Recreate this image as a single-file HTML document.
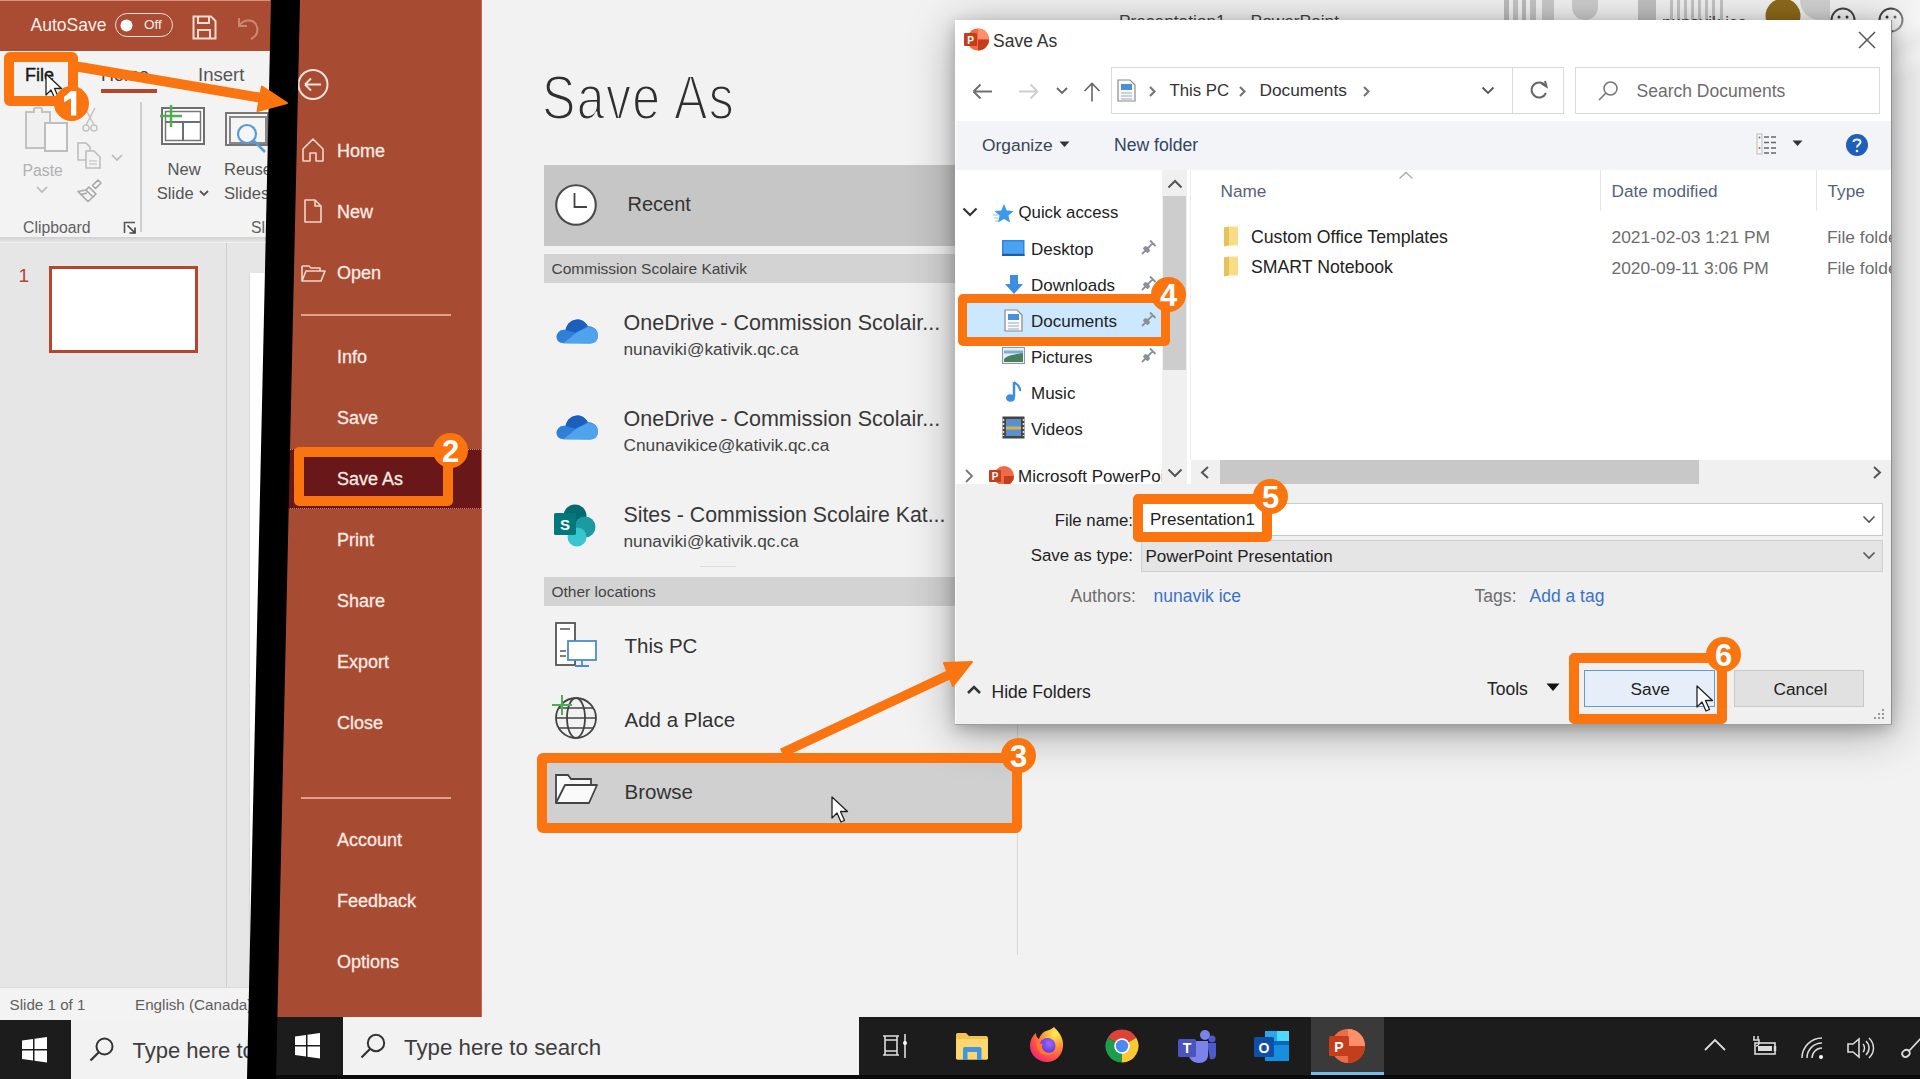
<!DOCTYPE html>
<html><head><meta charset="utf-8">
<style>
*{margin:0;padding:0;box-sizing:border-box}
html,body{width:1920px;height:1079px;overflow:hidden;background:#f1f1f1;font-family:"Liberation Sans",sans-serif}
.a{position:absolute}
.t{position:absolute;white-space:nowrap;line-height:1}
svg{position:absolute;overflow:visible}
</style></head><body>
<div class="a" style="left:0;top:0;width:300px;height:1079px;overflow:hidden">
<div class="a" style="left:0px;top:0px;width:300px;height:51px;background:#a94c33;"></div>
<div class="a" style="left:0px;top:0px;width:300px;height:1px;background:#d9937c;"></div>
<div class="a" style="left:0px;top:51px;width:300px;height:186px;background:#f3f3f3;"></div>
<div class="a" style="left:0px;top:237px;width:300px;height:5px;background:linear-gradient(#d0d0d0,#e6e6e6);"></div>
<div class="a" style="left:0px;top:243px;width:300px;height:745px;background:#e6e6e6;"></div>
<div class="a" style="left:226px;top:243px;width:1px;height:745px;background:#cdcdcd;"></div>
<div class="a" style="left:249px;top:273px;width:1px;height:715px;background:#d8d8d8;"></div>
<div class="a" style="left:250px;top:273px;width:60px;height:715px;background:#ffffff;"></div>
<div class="a" style="left:0px;top:987px;width:300px;height:33px;background:#f3f3f3;border-top:1px solid #d9d9d9"></div>
<div class="t" style="left:9.5px;top:996.6px;font-size:15.2px;color:#5f5f5f;">Slide 1 of 1</div>
<div class="t" style="left:135.0px;top:996.6px;font-size:15.2px;color:#5f5f5f;">English (Canada)</div>
<div class="a" style="left:0px;top:1020px;width:300px;height:59px;background:#f2f2f2;"></div>
<div class="a" style="left:0px;top:1020px;width:71px;height:59px;background:#1c1c1c;"></div>
<svg width="27" height="26" viewBox="0 0 27 26" style="left:22px;top:1037px"><path d="M0 3.5 L11 2 V12 H0Z M12.5 1.8 L25 0 V12 H12.5Z M0 13.5 H11 V23.5 L0 22Z M12.5 13.5 H25 V25.5 L12.5 23.7Z" fill="#fff"/></svg>
<svg width="26" height="26" viewBox="0 0 26 26" style="left:89px;top:1037px"><circle cx="15.5" cy="9.5" r="8" fill="none" stroke="#333" stroke-width="2"/><path d="M9.8 15.2 L1.5 23.5" stroke="#333" stroke-width="2.2"/></svg>
<div class="t" style="left:132.5px;top:1040.4px;font-size:22px;color:#3d3d3d;">Type here to search</div>
<div class="t" style="left:30.5px;top:16.9px;font-size:17.5px;color:#fbeee6;">AutoSave</div>
<div class="a" style="left:115px;top:12.5px;width:57.5px;height:24.5px;border:1.8px solid #f3dcd0;border-radius:13px"></div>
<svg width="13" height="13" viewBox="0 0 13 13" style="left:120px;top:19px"><circle cx="6.5" cy="6.5" r="6" fill="#fff"/></svg>
<div class="t" style="left:144.0px;top:18.4px;font-size:13.5px;color:#fbeee6;">Off</div>
<svg width="26" height="26" viewBox="0 0 26 26" style="left:192px;top:15px"><path d="M1.5 1.5 H19 L23.5 6 V23.5 H1.5Z" fill="none" stroke="#f3dcd0" stroke-width="2"/><path d="M6 1.5 V8 H17 V1.5 M6 23.5 V15 H18 V23.5" fill="none" stroke="#f3dcd0" stroke-width="2"/></svg>
<svg width="26" height="26" viewBox="0 0 26 26" style="left:236px;top:15px"><path d="M3 3 V11 H11 M3.5 10.5 C7 4 19 3 21 12 C22.5 18 19 22 15 24" fill="none" stroke="#c98a74" stroke-width="2"/></svg>
<div class="t" style="left:25.0px;top:65.8px;font-size:18px;color:#1a1a1a;-webkit-text-stroke:0.4px #1a1a1a">File</div>
<div class="t" style="left:101.0px;top:65.6px;font-size:18px;color:#444;">Home</div>
<div class="a" style="left:101px;top:89px;width:56px;height:4px;background:#b2472d;"></div>
<div class="t" style="left:198.0px;top:65.8px;font-size:18.5px;color:#555;">Insert</div>
<svg width="46" height="48" viewBox="0 0 46 48" style="left:24px;top:106px"><path d="M2 6 H10 V3 C10 1 18 1 18 3 V6 H26 V42 H2Z" fill="#f0f0f0" stroke="#c2c2c2" stroke-width="2"/><rect x="21" y="17" width="22" height="28" fill="#f7f7f7" stroke="#bdbdbd" stroke-width="2"/></svg>
<div class="t" style="left:22.5px;top:162.6px;font-size:15.8px;color:#b0b0b0;">Paste</div>
<svg width="12" height="8" viewBox="0 0 12 8" style="left:36px;top:186px"><path d="M1 1 L6 6 L11 1" fill="none" stroke="#b8b8b8" stroke-width="1.6"/></svg>
<svg width="16" height="26" viewBox="0 0 16 26" style="left:82px;top:107px"><path d="M3 1 L12 18 M13 1 L4 18" stroke="#c4c4c4" stroke-width="1.6"/><circle cx="4" cy="21" r="3" fill="none" stroke="#c4c4c4" stroke-width="1.6"/><circle cx="12" cy="21" r="3" fill="none" stroke="#c4c4c4" stroke-width="1.6"/></svg>
<svg width="26" height="27" viewBox="0 0 26 27" style="left:77px;top:142px"><path d="M1 1 H9 L13 5 V18 H1Z" fill="none" stroke="#bdbdbd" stroke-width="1.6"/><path d="M9 9 H17 L23 15 V26 H9Z" fill="#f3f3f3" stroke="#bdbdbd" stroke-width="1.6"/><path d="M12 19 H20 M12 22 H20" stroke="#bdbdbd" stroke-width="1.2"/></svg>
<svg width="12" height="8" viewBox="0 0 12 8" style="left:111px;top:154px"><path d="M1 1 L6 6 L11 1" fill="none" stroke="#b8b8b8" stroke-width="1.6"/></svg>
<svg width="28" height="26" viewBox="0 0 28 26" style="left:76px;top:179px"><path d="M25 4 L22 1 L16.5 6.5 L19.5 9.5Z" fill="none" stroke="#a8a8a8" stroke-width="1.6" stroke-linejoin="round"/><path d="M13 8 L20 15 L17 18 L10 11Z" fill="none" stroke="#a8a8a8" stroke-width="1.6" stroke-linejoin="round"/><path d="M10 11 L2 12.5 L12 22.5 L17 18" fill="none" stroke="#a8a8a8" stroke-width="1.6" stroke-linejoin="round"/><path d="M5 15.5 L11 14" stroke="#a8a8a8" stroke-width="1.3"/></svg>
<div class="a" style="left:140px;top:102px;width:1.5px;height:130px;background:#cfcfcf;"></div>
<div class="t" style="left:23.0px;top:220.1px;font-size:15.8px;color:#5f5f5f;">Clipboard</div>
<svg width="14" height="14" viewBox="0 0 14 14" style="left:123px;top:221px"><path d="M1.5 12 V1.5 H12" fill="none" stroke="#555" stroke-width="1.6"/><path d="M4.5 4.5 L12 12 M12 6.5 V12 H6.5" fill="none" stroke="#444" stroke-width="1.7"/></svg>
<svg width="50" height="44" viewBox="0 0 50 44" style="left:158px;top:103px"><rect x="4" y="5" width="42" height="36" fill="#fff" stroke="#6f6f6f" stroke-width="2"/><rect x="7.5" y="8.5" width="35" height="29" fill="none" stroke="#777" stroke-width="1.5"/><path d="M7.5 19 H42.5 M25 19 V37.5" stroke="#6f6f6f" stroke-width="2"/><path d="M2 13 H24 M13 2 V24" stroke="#4caf50" stroke-width="2.5"/></svg>
<div class="t" style="left:167.5px;top:162.4px;font-size:16.6px;color:#555;">New</div>
<div class="t" style="left:156.8px;top:186.4px;font-size:16.6px;color:#555;">Slide</div>
<svg width="10" height="7" viewBox="0 0 10 7" style="left:199px;top:190px"><path d="M1 1 L5 5 L9 1" fill="none" stroke="#555" stroke-width="1.8"/></svg>
<svg width="50" height="50" viewBox="0 0 50 50" style="left:225px;top:112px"><rect x="1" y="1" width="42" height="32" fill="none" stroke="#777" stroke-width="2"/><rect x="5" y="5" width="36" height="26" fill="#f5f5f5" stroke="#888" stroke-width="2"/><circle cx="22" cy="22" r="9" fill="none" stroke="#5b9bd5" stroke-width="2.2"/><path d="M28.5 28.5 L40 40" stroke="#5b9bd5" stroke-width="2.5"/></svg>
<div class="t" style="left:224.0px;top:162.4px;font-size:16.6px;color:#555;">Reuse</div>
<div class="t" style="left:224.0px;top:186.4px;font-size:16.6px;color:#555;">Slides</div>
<div class="t" style="left:251.0px;top:220.1px;font-size:15.8px;color:#5f5f5f;">Sli</div>
<div class="t" style="left:18.5px;top:266.4px;font-size:19px;color:#b2472d;">1</div>
<div class="a" style="left:48.5px;top:265.5px;width:149px;height:87px;border:3.2px solid #b2472d;background:#fff"></div>
</div>
<div class="a" style="left:270px;top:0px;width:211px;height:1017px;background:#a84b33;"></div>
<div class="a" style="left:270px;top:449px;width:211px;height:60px;background:#6a1719;border-top:1px dotted #c98a7a;border-bottom:1px dotted #c98a7a"></div>
<div class="a" style="left:301px;top:314px;width:150px;height:2px;background:#e3a18a;"></div>
<div class="a" style="left:301px;top:797px;width:150px;height:2px;background:#e3a18a;"></div>
<svg width="40" height="40" viewBox="0 0 40 40" style="left:293px;top:65px"><circle cx="20" cy="19.5" r="14.5" fill="none" stroke="#f6e4da" stroke-width="2"/><path d="M12 19.5 H28 M12 19.5 L18 13.5 M12 19.5 L18 25.5" fill="none" stroke="#f6e4da" stroke-width="2"/></svg>
<svg width="30" height="30" viewBox="0 0 30 30" style="left:300px;top:136px"><path d="M3 13 L13 3 L23 13 V25 H16 V17 H10 V25 H3 Z" fill="none" stroke="#f0d6c8" stroke-width="1.6" stroke-linejoin="round"/></svg>
<svg width="30" height="30" viewBox="0 0 30 30" style="left:302px;top:198px"><path d="M3 2 H13 L19 8 V24 H3 Z M13 2 V8 H19" fill="none" stroke="#f0d6c8" stroke-width="1.6" stroke-linejoin="round"/></svg>
<svg width="30" height="30" viewBox="0 0 30 30" style="left:300px;top:262px"><path d="M2 4 H9 L11 6 H20 V9 M2 4 V19 L6 9 H25 L21 19 H2" fill="none" stroke="#f0d6c8" stroke-width="1.6" stroke-linejoin="round"/></svg>
<div class="t" style="left:337.0px;top:141.8px;font-size:18px;color:#f8ebe3;-webkit-text-stroke:0.3px #f8ebe3">Home</div>
<div class="t" style="left:337.0px;top:202.8px;font-size:18px;color:#f8ebe3;-webkit-text-stroke:0.3px #f8ebe3">New</div>
<div class="t" style="left:337.0px;top:263.8px;font-size:18px;color:#f8ebe3;-webkit-text-stroke:0.3px #f8ebe3">Open</div>
<div class="t" style="left:337.0px;top:347.8px;font-size:18px;color:#f8ebe3;-webkit-text-stroke:0.3px #f8ebe3">Info</div>
<div class="t" style="left:337.0px;top:408.8px;font-size:18px;color:#f8ebe3;-webkit-text-stroke:0.3px #f8ebe3">Save</div>
<div class="t" style="left:337.0px;top:469.8px;font-size:18px;color:#f8ebe3;-webkit-text-stroke:0.3px #f8ebe3">Save As</div>
<div class="t" style="left:337.0px;top:530.8px;font-size:18px;color:#f8ebe3;-webkit-text-stroke:0.3px #f8ebe3">Print</div>
<div class="t" style="left:337.0px;top:591.8px;font-size:18px;color:#f8ebe3;-webkit-text-stroke:0.3px #f8ebe3">Share</div>
<div class="t" style="left:337.0px;top:652.8px;font-size:18px;color:#f8ebe3;-webkit-text-stroke:0.3px #f8ebe3">Export</div>
<div class="t" style="left:337.0px;top:713.8px;font-size:18px;color:#f8ebe3;-webkit-text-stroke:0.3px #f8ebe3">Close</div>
<div class="t" style="left:337.0px;top:830.8px;font-size:18px;color:#f8ebe3;-webkit-text-stroke:0.3px #f8ebe3">Account</div>
<div class="t" style="left:337.0px;top:891.8px;font-size:18px;color:#f8ebe3;-webkit-text-stroke:0.3px #f8ebe3">Feedback</div>
<div class="t" style="left:337.0px;top:952.8px;font-size:18px;color:#f8ebe3;-webkit-text-stroke:0.3px #f8ebe3">Options</div>
<div class="a" style="left:481px;top:0px;width:1439px;height:1017px;background:#f2f2f2;"></div>
<div class="a" style="left:481px;top:0px;width:1px;height:1017px;background:#c9654a;"></div>
<div class="t" style="left:542.0px;top:76.7px;font-size:50px;color:#2f2f2f;letter-spacing:1.4px;transform:scaleY(1.25);transform-origin:0 85%;-webkit-text-stroke:1.6px #f2f2f2">Save As</div>
<div class="a" style="left:544px;top:165px;width:500px;height:81px;background:#c6c6c6;"></div>
<svg width="44" height="44" viewBox="0 0 44 44" style="left:554px;top:183px"><circle cx="22" cy="22" r="19.8" fill="#fff" stroke="#4a4a4a" stroke-width="2.1"/><path d="M20.5 10 V24 H33" fill="none" stroke="#444" stroke-width="1.8"/></svg>
<div class="t" style="left:627.5px;top:194.1px;font-size:20px;color:#333;">Recent</div>
<div class="a" style="left:544px;top:254px;width:500px;height:29px;background:#d3d3d3;"></div>
<div class="t" style="left:551.5px;top:260.9px;font-size:15.5px;color:#444;">Commission Scolaire Kativik</div>
<svg width="44" height="30" viewBox="0 0 44 30" style="left:555px;top:316px"><path d="M8 27 C2 27 0 21 2.5 17.5 C4.5 14 8 13.5 10.5 14 C12 7 17 3.5 22.5 3.5 C27 3.5 30.5 6 32.5 10 C38 10 43 13.5 43 19.5 C43 24.5 39.5 27.5 35 27.5 Z" fill="#2f7fd8"/><path d="M10.5 14 C12 7 17 3.5 22.5 3.5 C27 3.5 30.5 6 32.5 10 L22 17Z" fill="#1c5fbd"/><path d="M8 27.5 L22 16 L33 11 C38 11 43 14 43 19.5 C43 24.5 39.5 27.5 35 27.5Z" fill="#4ea3ec"/></svg>
<div class="t" style="left:623.5px;top:312.8px;font-size:21.5px;color:#383838;">OneDrive - Commission Scolair...</div>
<div class="t" style="left:623.5px;top:340.9px;font-size:17.3px;color:#444;">nunaviki@kativik.qc.ca</div>
<svg width="44" height="30" viewBox="0 0 44 30" style="left:555px;top:412px"><path d="M8 27 C2 27 0 21 2.5 17.5 C4.5 14 8 13.5 10.5 14 C12 7 17 3.5 22.5 3.5 C27 3.5 30.5 6 32.5 10 C38 10 43 13.5 43 19.5 C43 24.5 39.5 27.5 35 27.5 Z" fill="#2f7fd8"/><path d="M10.5 14 C12 7 17 3.5 22.5 3.5 C27 3.5 30.5 6 32.5 10 L22 17Z" fill="#1c5fbd"/><path d="M8 27.5 L22 16 L33 11 C38 11 43 14 43 19.5 C43 24.5 39.5 27.5 35 27.5Z" fill="#4ea3ec"/></svg>
<div class="t" style="left:623.5px;top:408.8px;font-size:21.5px;color:#383838;">OneDrive - Commission Scolair...</div>
<div class="t" style="left:623.5px;top:436.9px;font-size:17.3px;color:#444;">Cnunavikice@kativik.qc.ca</div>
<svg width="44" height="44" viewBox="0 0 44 44" style="left:554px;top:503px"><circle cx="21" cy="13" r="11.5" fill="#036c70"/><circle cx="31" cy="24" r="10.5" fill="#1a9ba1"/><circle cx="23" cy="34" r="9.5" fill="#37c6d0"/><rect x="0" y="10" width="22" height="22" rx="1.5" fill="#03787c"/><text x="11" y="27" text-anchor="middle" font-family="Liberation Sans" font-weight="bold" font-size="15" fill="#fff">S</text></svg>
<div class="t" style="left:623.5px;top:505.0px;font-size:21.3px;color:#383838;">Sites - Commission Scolaire Kat...</div>
<div class="t" style="left:623.5px;top:532.9px;font-size:17.3px;color:#444;">nunaviki@kativik.qc.ca</div>
<div class="a" style="left:700px;top:566px;width:36px;height:1px;background:#dcdcdc;"></div>
<div class="a" style="left:544px;top:577px;width:500px;height:29px;background:#d3d3d3;"></div>
<div class="t" style="left:551.5px;top:584.4px;font-size:15.5px;color:#444;">Other locations</div>
<svg width="46" height="48" viewBox="0 0 46 48" style="left:554px;top:621px"><rect x="2" y="2" width="19" height="42" fill="#fff" stroke="#555" stroke-width="1.8"/><path d="M6 8 H16 M6 30 H12 M6 35 H12" stroke="#555" stroke-width="1.6"/><rect x="14" y="20" width="28" height="19" fill="#fff" stroke="#4a8bd6" stroke-width="1.8"/><path d="M28 39 V44 M21 45 H35" stroke="#4a8bd6" stroke-width="1.8"/></svg>
<div class="t" style="left:624.5px;top:636.3px;font-size:20.5px;color:#333;">This PC</div>
<svg width="48" height="48" viewBox="0 0 48 48" style="left:552px;top:693px"><circle cx="24" cy="25" r="20" fill="none" stroke="#444" stroke-width="1.8"/><ellipse cx="24" cy="25" rx="9" ry="20" fill="none" stroke="#444" stroke-width="1.8"/><path d="M4 25 H44 M7 15 H41 M7 35 H41" stroke="#444" stroke-width="1.6"/><path d="M0 12 H20 M10 2 V22" stroke="#4caf50" stroke-width="2"/></svg>
<div class="t" style="left:624.5px;top:709.6px;font-size:20.5px;color:#333;">Add a Place</div>
<div class="a" style="left:546px;top:762px;width:468px;height:61px;background:#d0d0d0;"></div>
<svg width="48" height="36" viewBox="0 0 48 36" style="left:553px;top:772px"><path d="M3 31 V3 H15 L18 7 H38 V13" fill="#fafafa" stroke="#444" stroke-width="1.8"/><path d="M3 31 L12 13 H44 L36 31Z" fill="#fafafa" stroke="#444" stroke-width="1.8" stroke-linejoin="round"/></svg>
<div class="t" style="left:624.5px;top:782.1px;font-size:20.5px;color:#333;">Browse</div>
<div class="a" style="left:1017px;top:725px;width:1px;height:230px;background:#d8d8d8;"></div>
<div class="t" style="left:1119.0px;top:13.4px;font-size:17.3px;color:#444;">Presentation1&nbsp;&nbsp;-&nbsp;&nbsp;PowerPoint</div>
<div class="a" style="left:1504px;top:0px;width:5px;height:20px;background:#bcbcbc;"></div>
<div class="a" style="left:1513px;top:0px;width:5px;height:20px;background:#c4c4c4;"></div>
<div class="a" style="left:1522px;top:0px;width:4px;height:20px;background:#bcbcbc;"></div>
<div class="a" style="left:1530px;top:0px;width:6px;height:20px;background:#c4c4c4;"></div>
<div class="a" style="left:1542px;top:0px;width:12px;height:20px;background:#c9c9c9;"></div>
<div class="a" style="left:1572px;top:0px;width:26px;height:20px;background:#cdcdcd;border-radius:0 0 13px 13px"></div>
<div class="a" style="left:1638px;top:0px;width:18px;height:20px;background:#c0c0c0;"></div>
<div class="a" style="left:1670px;top:0px;width:3px;height:20px;background:#c4c4c4;"></div>
<div class="a" style="left:1677px;top:0px;width:3px;height:20px;background:#c4c4c4;"></div>
<div class="a" style="left:1684px;top:0px;width:3px;height:20px;background:#c4c4c4;"></div>
<div class="a" style="left:1691px;top:0px;width:3px;height:20px;background:#c4c4c4;"></div>
<div class="a" style="left:1698px;top:0px;width:3px;height:20px;background:#c4c4c4;"></div>
<div class="a" style="left:1705px;top:0px;width:3px;height:20px;background:#c4c4c4;"></div>
<div class="a" style="left:1712px;top:0px;width:3px;height:20px;background:#c4c4c4;"></div>
<div class="a" style="left:1720px;top:0px;width:3px;height:20px;background:#c4c4c4;"></div>
<div class="t" style="left:1662.0px;top:13.6px;font-size:17px;color:#444;">nunavik ice</div>
<svg width="38" height="38" viewBox="0 0 38 38" style="left:1764px;top:-3px"><circle cx="19" cy="19" r="17.5" fill="#8d6a1a"/></svg>
<div class="a" style="left:1800px;top:0px;width:30px;height:20px;background:#d2d2d2;border-radius:0 0 0 20px"></div>
<svg width="32" height="32" viewBox="0 0 32 32" style="left:1827px;top:4px"><circle cx="16" cy="16" r="11.5" fill="none" stroke="#444" stroke-width="2"/><circle cx="12" cy="13" r="1.5" fill="#333"/><circle cx="20" cy="13" r="1.5" fill="#333"/></svg>
<svg width="32" height="32" viewBox="0 0 32 32" style="left:1875px;top:4px"><circle cx="16" cy="16" r="11.5" fill="none" stroke="#444" stroke-width="2"/><circle cx="12" cy="13" r="1.5" fill="#333"/><circle cx="20" cy="13" r="1.5" fill="#333"/></svg>
<div class="a" style="left:1893px;top:0px;width:27px;height:90px;background:linear-gradient(150deg,rgba(255,255,255,0) 0%,rgba(255,255,255,0.5) 35%,rgba(255,255,255,0) 50%,rgba(255,255,255,0.45) 65%,rgba(255,255,255,0) 80%);"></div>
<div class="a" style="left:270px;top:1017px;width:1650px;height:62px;background:#1c1c1c;"></div>
<div class="a" style="left:270px;top:1075px;width:1650px;height:4px;background:#0a0a0a;"></div>
<div class="a" style="left:343px;top:1017px;width:516px;height:58px;background:#f2f2f2;"></div>
<svg width="27" height="26" viewBox="0 0 27 26" style="left:295px;top:1033px"><path d="M0 3.5 L11 2 V12 H0Z M12.5 1.8 L25 0 V12 H12.5Z M0 13.5 H11 V23.5 L0 22Z M12.5 13.5 H25 V25.5 L12.5 23.7Z" fill="#fff"/></svg>
<svg width="27" height="27" viewBox="0 0 27 27" style="left:360px;top:1033px"><circle cx="16" cy="10" r="8.2" fill="none" stroke="#333" stroke-width="2"/><path d="M10.2 15.8 L1.5 24.5" stroke="#333" stroke-width="2.2"/></svg>
<div class="t" style="left:404.0px;top:1037.1px;font-size:22.3px;color:#3d3d3d;">Type here to search</div>
<svg width="28" height="26" viewBox="0 0 28 26" style="left:882px;top:1033px"><path d="M1 3 H17 M1 22 H17 M3 3 V22 M15 3 V22 M3 7 H15 M3 18 H15" fill="none" stroke="#ddd" stroke-width="1.6"/><path d="M23 1 V25" stroke="#ddd" stroke-width="1.6"/><circle cx="23" cy="10" r="2" fill="#fff"/></svg>
<svg width="34" height="28" viewBox="0 0 34 28" style="left:955px;top:1032px"><path d="M1 3 C1 1.5 2 1 3 1 H11 L14 4 H31 C32 4 33 5 33 6 V26 C33 27 32 27.5 31 27.5 H3 C2 27.5 1 27 1 26Z" fill="#f2c14e"/><path d="M1 7 H33 V26 C33 27 32 27.5 31 27.5 H3 C2 27.5 1 27 1 26Z" fill="#fcd770"/><path d="M8 28 V17 C8 15.5 9 15 10.5 15 H24 C25.5 15 26.5 15.5 26.5 17 V28 H22 V20 H12.5 V28Z" fill="#3f95e0"/></svg>
<svg width="40" height="40" viewBox="0 0 40 40" style="left:1027px;top:1025px"><defs><radialGradient id="ffg" cx="0.75" cy="0.2" r="1"><stop offset="0" stop-color="#fff44f"/><stop offset="0.35" stop-color="#ff9a3a"/><stop offset="0.7" stop-color="#ff4a4a"/><stop offset="1" stop-color="#e31587"/></radialGradient><radialGradient id="ffp" cx="0.6" cy="0.35" r="0.7"><stop offset="0" stop-color="#9a6bff"/><stop offset="1" stop-color="#5b2ad6"/></radialGradient></defs><path d="M27 2 C33 8 37 14 36 22 C35 31 28 37 20 37 C11 37 3 30 3 21 C3 15 6 10 9 8 C9 11 10 13 12 14 C13 10 16 7 19 6 C22 5 25 4 27 2Z" fill="url(#ffg)"/><circle cx="20.5" cy="21" r="8" fill="url(#ffp)"/><path d="M10 16 C9 24 13 30 20 30 C26 30 29 26 29.5 22 C28 27 23 29 19 27 C15 25 14 21 16 19 C14 19 11.5 18 10 16Z" fill="#ff7a2e"/></svg>
<svg width="34" height="34" viewBox="0 0 34 34" style="left:1105px;top:1029px"><path d="M17 17 L2.71 8.75 A16.5 16.5 0 0 1 31.29 8.75 Z" fill="#db4437"/><path d="M17 17 L31.29 8.75 A16.5 16.5 0 0 1 17 33.5 Z" fill="#fcc934"/><path d="M17 17 L17 33.5 A16.5 16.5 0 0 1 2.71 8.75 Z" fill="#1e9e4a"/><circle cx="17" cy="17" r="7.8" fill="#fff"/><circle cx="17" cy="17" r="6.2" fill="#4a8af4"/></svg>
<svg width="40" height="34" viewBox="0 0 40 34" style="left:1177px;top:1029px"><circle cx="28" cy="6" r="5" fill="#7b83eb"/><circle cx="35" cy="10" r="3.5" fill="#5059c9"/><path d="M30 14 H39 V26 C39 30 35 31 33 30Z" fill="#5059c9"/><path d="M12 12 H31 V26 C31 31 27 34 22 34 C16 34 12 30 12 26Z" fill="#7b83eb"/><rect x="1" y="10" width="18" height="18" rx="1.5" fill="#4b53bc"/><text x="10" y="24" text-anchor="middle" font-family="Liberation Sans" font-weight="bold" font-size="14" fill="#fff">T</text></svg>
<svg width="38" height="34" viewBox="0 0 38 34" style="left:1253px;top:1029px"><rect x="12" y="2" width="24" height="30" rx="1.5" fill="#0a66c2"/><path d="M12 2 H36 V12 H12Z" fill="#28a8ea"/><path d="M24 2 H36 V12 H24Z" fill="#50d9ff"/><path d="M12 16 L36 16 V32 H12Z" fill="#1490df"/><rect x="1" y="8" width="20" height="20" rx="1.5" fill="#0f4fa8"/><text x="11" y="23.5" text-anchor="middle" font-family="Liberation Sans" font-weight="bold" font-size="14" fill="#fff">O</text></svg>
<div class="a" style="left:1311px;top:1017px;width:73px;height:58px;background:#3a3a3a;"></div>
<div class="a" style="left:1311px;top:1072px;width:73px;height:3px;background:#76b9ed;"></div>
<svg width="38" height="36" viewBox="0 0 38 36" style="left:1328px;top:1028px"><circle cx="20" cy="18" r="17" fill="#ed6c47"/><path d="M20 1 A17 17 0 0 1 37 18 H20Z" fill="#ff8f6b"/><path d="M20 18 H37 A17 17 0 0 1 20 35Z" fill="#c43e1c"/><rect x="1" y="8" width="20" height="20" rx="1.5" fill="#c43e1c"/><text x="11" y="23.5" text-anchor="middle" font-family="Liberation Sans" font-weight="bold" font-size="14" fill="#fff">P</text></svg>
<svg width="24" height="14" viewBox="0 0 24 14" style="left:1703px;top:1038px"><path d="M2 12 L12 2 L22 12" fill="none" stroke="#ddd" stroke-width="1.8"/></svg>
<svg width="30" height="24" viewBox="0 0 30 24" style="left:1749px;top:1034px"><path d="M5 2 V6 M9 2 V6 M4 6 H10 V9 C10 11 8 12 7 12" fill="none" stroke="#ddd" stroke-width="1.5"/><rect x="6" y="9" width="20" height="11" fill="none" stroke="#ddd" stroke-width="1.6"/><rect x="9" y="12" width="14" height="5" fill="#ddd"/><path d="M26 12 V17" stroke="#ddd" stroke-width="2.5"/></svg>
<svg width="26" height="24" viewBox="0 0 26 24" style="left:1800px;top:1036px"><path d="M2 22 A20 20 0 0 1 22 2 M7 22 A15 15 0 0 1 22 7 M12 22 A10 10 0 0 1 22 12" fill="none" stroke="#ddd" stroke-width="1.5"/><circle cx="21" cy="21" r="2" fill="#fff"/></svg>
<svg width="28" height="24" viewBox="0 0 28 24" style="left:1846px;top:1036px"><path d="M2 8 H7 L13 3 V21 L7 16 H2Z" fill="none" stroke="#ddd" stroke-width="1.6"/><path d="M17 8 C19 10 19 14 17 16 M20 5 C24 9 24 15 20 19 M23 2 C29 8 29 16 23 22" fill="none" stroke="#ddd" stroke-width="1.5"/></svg>
<svg width="24" height="26" viewBox="0 0 24 26" style="left:1900px;top:1034px"><path d="M3 22 C0 18 6 14 9 17 C12 20 6 25 3 22Z M9 17 L22 3" fill="none" stroke="#ddd" stroke-width="1.8"/></svg>
<svg width="1920" height="1079" style="left:0;top:0"><polygon points="271,0 300,0 276,1079 247,1079" fill="#000"/></svg>
<div class="a" style="left:955px;top:20px;width:937px;height:705px;background:#fff;box-shadow:0 4px 14px rgba(0,0,0,0.22), 0 8px 44px rgba(0,0,0,0.32);border-right:1.5px solid #8f8f8f;border-bottom:1.5px solid #9f9f9f"></div>
<svg width="28" height="26" viewBox="0 0 28 26" style="left:963px;top:27px"><circle cx="15" cy="12.5" r="11" fill="#ed6c47"/><path d="M15 1.5 A11 11 0 0 1 26 12.5 H15Z" fill="#ff8f6b"/><path d="M15 12.5 H26 A11 11 0 0 1 15 23.5Z" fill="#c43e1c"/><rect x="1" y="6" width="13" height="13" rx="1" fill="#c43e1c"/><text x="7.5" y="16.5" text-anchor="middle" font-family="Liberation Sans" font-weight="bold" font-size="10" fill="#fff">P</text></svg>
<div class="t" style="left:993.0px;top:32.7px;font-size:17.5px;color:#333;">Save As</div>
<svg width="18" height="18" viewBox="0 0 18 18" style="left:1858px;top:31px"><path d="M1 1 L17 17 M17 1 L1 17" stroke="#555" stroke-width="1.5"/></svg>
<svg width="21" height="17" viewBox="0 0 21 17" style="left:972px;top:83px"><path d="M1.5 8.5 H20 M1.5 8.5 L8.5 1.5 M1.5 8.5 L8.5 15.5" fill="none" stroke="#707070" stroke-width="2"/></svg>
<svg width="21" height="17" viewBox="0 0 21 17" style="left:1018px;top:83px"><path d="M19.5 8.5 H1 M19.5 8.5 L12.5 1.5 M19.5 8.5 L12.5 15.5" fill="none" stroke="#cfcfcf" stroke-width="2"/></svg>
<svg width="12" height="8" viewBox="0 0 12 8" style="left:1056px;top:87px"><path d="M1 1 L6 6 L11 1" fill="none" stroke="#666" stroke-width="1.8"/></svg>
<svg width="18" height="20" viewBox="0 0 18 20" style="left:1083px;top:82px"><path d="M9 19.5 V1.5 M1.5 9 L9 1.5 L16.5 9" fill="none" stroke="#666" stroke-width="1.6"/></svg>
<div class="a" style="left:1111px;top:67px;width:453px;height:47px;border:1px solid #d9d9d9;background:#fff"></div>
<div class="a" style="left:1512px;top:68px;width:1px;height:45px;background:#d9d9d9;"></div>
<svg width="19" height="23" viewBox="0 0 19 23" style="left:1117px;top:79px"><path d="M1 1 H13 L18 6 V22 H1Z" fill="#fafafa" stroke="#8a8a8a" stroke-width="1.2"/><rect x="4" y="5" width="11" height="6" fill="#4a90d9"/><path d="M4 14 H15 M4 17 H15 M4 20 H15" stroke="#9ab" stroke-width="1"/></svg>
<svg width="9" height="13" viewBox="0 0 9 13" style="left:1148px;top:85px"><path d="M2 2 L6.5 6.5 L2 11" fill="none" stroke="#777" stroke-width="2.2"/></svg>
<div class="t" style="left:1169.5px;top:82.8px;font-size:16.8px;color:#333;">This PC</div>
<svg width="9" height="13" viewBox="0 0 9 13" style="left:1238px;top:85px"><path d="M2 2 L6.5 6.5 L2 11" fill="none" stroke="#777" stroke-width="2.2"/></svg>
<div class="t" style="left:1259.5px;top:82.4px;font-size:17.3px;color:#333;">Documents</div>
<svg width="9" height="13" viewBox="0 0 9 13" style="left:1362px;top:85px"><path d="M2 2 L6.5 6.5 L2 11" fill="none" stroke="#777" stroke-width="2.2"/></svg>
<svg width="14" height="9" viewBox="0 0 14 9" style="left:1481px;top:86px"><path d="M1.5 1.5 L7 7 L12.5 1.5" fill="none" stroke="#555" stroke-width="1.8"/></svg>
<svg width="22" height="22" viewBox="0 0 22 22" style="left:1528px;top:80px"><path d="M17.5 6 A7.5 7.5 0 1 0 18 13" fill="none" stroke="#666" stroke-width="2"/><path d="M13.5 3.5 L18.5 6.5 L17 1" fill="none" stroke="#666" stroke-width="2"/></svg>
<div class="a" style="left:1575px;top:67px;width:305px;height:47px;border:1px solid #d9d9d9;background:#fff"></div>
<svg width="22" height="22" viewBox="0 0 22 22" style="left:1597px;top:80px"><circle cx="13.5" cy="8.5" r="6.5" fill="none" stroke="#777" stroke-width="1.5"/><path d="M9 13 L2 20" stroke="#777" stroke-width="1.6"/></svg>
<div class="t" style="left:1636.5px;top:82.7px;font-size:17.5px;color:#6d6d6d;">Search Documents</div>
<div class="a" style="left:956px;top:121px;width:935px;height:49px;background:#f2f4f8;"></div>
<div class="t" style="left:982.0px;top:137.3px;font-size:17.4px;color:#3a4554;">Organize</div>
<svg width="11" height="7" viewBox="0 0 11 7" style="left:1059px;top:141px"><path d="M0.5 0.5 H10.5 L5.5 6Z" fill="#333"/></svg>
<div class="t" style="left:1114.0px;top:137.1px;font-size:17.6px;color:#30445e;">New folder</div>
<svg width="24" height="22" viewBox="0 0 24 22" style="left:1756px;top:133px"><rect x="1" y="1" width="5" height="20" fill="#f6f6f6" stroke="#bbb" stroke-width="1"/><path d="M8 4 H22 M8 9.5 H22 M8 15 H22 M8 20 H22" stroke="#666" stroke-width="1.5" stroke-dasharray="5 2"/><circle cx="3.5" cy="4.5" r="1" fill="#777"/><circle cx="3.5" cy="15" r="1" fill="#c55"/></svg>
<svg width="11" height="7" viewBox="0 0 11 7" style="left:1792px;top:140px"><path d="M0.5 0.5 H10.5 L5.5 6Z" fill="#333"/></svg>
<svg width="24" height="24" viewBox="0 0 24 24" style="left:1845px;top:133px"><circle cx="12" cy="12" r="11" fill="#1f5fb8"/><path d="M8.5 9 C8.5 5.5 15.5 5.5 15.5 9 C15.5 11.5 12 11.8 12 14.5" fill="none" stroke="#e6f0ff" stroke-width="2"/><circle cx="12" cy="18" r="1.3" fill="#e6f0ff"/></svg>
<div class="a" style="left:956px;top:170px;width:207px;height:317px;background:#ffffff;"></div>
<div class="a" style="left:1162px;top:170px;width:25px;height:317px;background:#f0f0f0;"></div>
<div class="a" style="left:1163px;top:196px;width:23px;height:174px;background:#cdcdcd;"></div>
<svg width="16" height="10" viewBox="0 0 16 10" style="left:1167px;top:179px"><path d="M1.5 8.5 L8 2 L14.5 8.5" fill="none" stroke="#555" stroke-width="2"/></svg>
<svg width="16" height="10" viewBox="0 0 16 10" style="left:1167px;top:468px"><path d="M1.5 1.5 L8 8 L14.5 1.5" fill="none" stroke="#555" stroke-width="2"/></svg>
<div class="a" style="left:1190px;top:170px;width:1px;height:290px;background:#eeeeee;"></div>
<div class="a" style="left:963px;top:302px;width:200px;height:37px;background:#cce8ff;"></div>
<svg width="16" height="10" viewBox="0 0 16 10" style="left:962px;top:207px"><path d="M1.5 1.5 L8 8 L14.5 1.5" fill="none" stroke="#333" stroke-width="2.2"/></svg>
<svg width="22" height="20" viewBox="0 0 22 20" style="left:992px;top:203px"><path d="M12 1 L14.8 7.5 L21.5 8 L16.5 12.5 L18 19.5 L12 16 L6 19.5 L7.5 12.5 L2.5 8 L9.2 7.5Z" fill="#3d9ae8"/><path d="M1 12 H6 M2 15 H6 M3 18 H7" stroke="#8cc4f2" stroke-width="1"/></svg>
<div class="t" style="left:1018.5px;top:204.5px;font-size:16.8px;color:#222;">Quick access</div>
<svg width="23" height="17" viewBox="0 0 23 17" style="left:1002px;top:240px"><rect x="0" y="0" width="22.5" height="16" fill="#2e86de"/><rect x="1.5" y="1.5" width="19.5" height="12" fill="#4aa3f0"/><rect x="0" y="14" width="22.5" height="2" fill="#1c5fa8"/></svg>
<div class="t" style="left:1031.0px;top:240.6px;font-size:17px;color:#222;">Desktop</div>
<svg width="20" height="22" viewBox="0 0 20 22" style="left:1004px;top:274px"><path d="M6 1 H14 V10 H19 L10 20 L1 10 H6Z" fill="#3d8ee0"/></svg>
<div class="t" style="left:1031.0px;top:276.6px;font-size:17px;color:#222;">Downloads</div>
<svg width="19" height="23" viewBox="0 0 19 23" style="left:1004px;top:309px"><path d="M1 1 H13 L18 6 V22 H1Z" fill="#fafafa" stroke="#8a8a8a" stroke-width="1.2"/><rect x="4" y="5" width="11" height="6" fill="#4a90d9"/><path d="M4 14 H15 M4 17 H15 M4 20 H15" stroke="#9ab" stroke-width="1"/></svg>
<div class="t" style="left:1031.0px;top:312.6px;font-size:17px;color:#222;">Documents</div>
<svg width="23" height="18" viewBox="0 0 23 18" style="left:1002px;top:347px"><rect x="0.5" y="0.5" width="22" height="16" fill="#e8eef3" stroke="#8a98a6" stroke-width="1"/><path d="M2 12 C7 7 12 9 21 5 V15 H2Z" fill="#4b7e5e"/><path d="M2 5 H21" stroke="#7aaedc" stroke-width="3"/></svg>
<div class="t" style="left:1031.0px;top:348.6px;font-size:17px;color:#222;">Pictures</div>
<svg width="18" height="23" viewBox="0 0 18 23" style="left:1005px;top:381px"><path d="M9 1 V16" stroke="#3d8ee0" stroke-width="2.5"/><ellipse cx="5.5" cy="17" rx="4.5" ry="3.8" fill="#3d8ee0"/><path d="M9 1 C12 4 16 5 15 10" fill="none" stroke="#3d8ee0" stroke-width="2"/></svg>
<div class="t" style="left:1031.0px;top:384.6px;font-size:17px;color:#222;">Music</div>
<svg width="23" height="23" viewBox="0 0 23 23" style="left:1002px;top:416px"><rect x="0.5" y="0.5" width="22" height="22" fill="#444"/><rect x="4" y="3" width="15" height="17" fill="#5a8fd0"/><path d="M4 12 H19" stroke="#d9b24a" stroke-width="3"/><path d="M1.5 3 V20 M21.5 3 V20" stroke="#ddd" stroke-width="1.5" stroke-dasharray="2 2"/></svg>
<div class="t" style="left:1031.0px;top:420.6px;font-size:17px;color:#222;">Videos</div>
<svg width="16" height="16" viewBox="0 0 16 16" style="left:1141px;top:239px"><path d="M9 1.5 L14.5 7 M11.8 4.2 L7 9 L4.5 8 L3 9.5 L6.5 13 L8 11.5 L7 9 M5 11 L1 15" fill="#8a9099" stroke="#8a9099" stroke-width="1.8" stroke-linejoin="round"/></svg>
<svg width="16" height="16" viewBox="0 0 16 16" style="left:1141px;top:275px"><path d="M9 1.5 L14.5 7 M11.8 4.2 L7 9 L4.5 8 L3 9.5 L6.5 13 L8 11.5 L7 9 M5 11 L1 15" fill="#8a9099" stroke="#8a9099" stroke-width="1.8" stroke-linejoin="round"/></svg>
<svg width="16" height="16" viewBox="0 0 16 16" style="left:1141px;top:311px"><path d="M9 1.5 L14.5 7 M11.8 4.2 L7 9 L4.5 8 L3 9.5 L6.5 13 L8 11.5 L7 9 M5 11 L1 15" fill="#8a9099" stroke="#8a9099" stroke-width="1.8" stroke-linejoin="round"/></svg>
<svg width="16" height="16" viewBox="0 0 16 16" style="left:1141px;top:347px"><path d="M9 1.5 L14.5 7 M11.8 4.2 L7 9 L4.5 8 L3 9.5 L6.5 13 L8 11.5 L7 9 M5 11 L1 15" fill="#8a9099" stroke="#8a9099" stroke-width="1.8" stroke-linejoin="round"/></svg>
<svg width="10" height="16" viewBox="0 0 10 16" style="left:964px;top:468px"><path d="M2 2 L8 8 L2 14" fill="none" stroke="#777" stroke-width="1.8"/></svg>
<svg width="28" height="22" viewBox="0 0 28 22" style="left:988px;top:465px"><circle cx="16" cy="11" r="10" fill="#ed6c47"/><path d="M16 11 H26 A10 10 0 0 1 16 21Z" fill="#c43e1c"/><rect x="1" y="5" width="12" height="12" rx="1" fill="#c43e1c"/><text x="7" y="15" text-anchor="middle" font-family="Liberation Sans" font-weight="bold" font-size="10" fill="#fff">P</text></svg>
<div class="a" style="left:1018px;top:464px;width:144px;height:24px;overflow:hidden">
<div class="t" style="left:0;top:3.5px;font-size:17px;color:#222">Microsoft PowerPoint</div></div>
<div class="a" style="left:1191px;top:170px;width:700px;height:290px;background:#ffffff;"></div>
<div class="t" style="left:1220.5px;top:183.2px;font-size:17.2px;color:#56627a;">Name</div>
<svg width="16" height="9" viewBox="0 0 16 9" style="left:1398px;top:171px"><path d="M1.5 7.5 L8 1.5 L14.5 7.5" fill="none" stroke="#aaa" stroke-width="1.3"/></svg>
<div class="a" style="left:1600px;top:170px;width:1px;height:41px;background:#e5e5e5;"></div>
<div class="a" style="left:1816px;top:170px;width:1px;height:41px;background:#e5e5e5;"></div>
<div class="t" style="left:1611.5px;top:183.2px;font-size:17.2px;color:#56627a;">Date modified</div>
<div class="t" style="left:1827.5px;top:183.2px;font-size:17.2px;color:#56627a;">Type</div>
<svg width="16" height="21" viewBox="0 0 16 21" style="left:1223px;top:225.8px"><path d="M1 1.5 L6 0.5 V19.5 L1 20.5Z" fill="#e6c35a"/><path d="M6 0.5 H15 V19.5 H6Z" fill="#f8dc86"/></svg>
<div class="t" style="left:1251.0px;top:228.8px;font-size:17.7px;color:#222;">Custom Office Templates</div>
<div class="t" style="left:1611.5px;top:229.1px;font-size:17.4px;color:#6d6d6d;">2021-02-03 1:21 PM</div>
<div class="a" style="left:1827px;top:227.8px;width:64px;height:22px;overflow:hidden"><div class="t" style="left:0;top:1.7px;font-size:17.4px;color:#6d6d6d">File folder</div></div>
<svg width="16" height="21" viewBox="0 0 16 21" style="left:1223px;top:256.4px"><path d="M1 1.5 L6 0.5 V19.5 L1 20.5Z" fill="#e6c35a"/><path d="M6 0.5 H15 V19.5 H6Z" fill="#f8dc86"/></svg>
<div class="t" style="left:1251.0px;top:259.4px;font-size:17.7px;color:#222;">SMART Notebook</div>
<div class="t" style="left:1611.5px;top:259.7px;font-size:17.4px;color:#6d6d6d;">2020-09-11 3:06 PM</div>
<div class="a" style="left:1827px;top:258.4px;width:64px;height:22px;overflow:hidden"><div class="t" style="left:0;top:1.7px;font-size:17.4px;color:#6d6d6d">File folder</div></div>
<div class="a" style="left:1191px;top:460px;width:700px;height:24px;background:#f0f0f0;"></div>
<div class="a" style="left:1220px;top:460px;width:479px;height:24px;background:#c8c8c8;"></div>
<svg width="10" height="15" viewBox="0 0 10 15" style="left:1200px;top:465px"><path d="M8 2 L2 7.5 L8 13" fill="none" stroke="#555" stroke-width="2"/></svg>
<svg width="10" height="15" viewBox="0 0 10 15" style="left:1872px;top:465px"><path d="M2 2 L8 7.5 L2 13" fill="none" stroke="#555" stroke-width="2"/></svg>
<div class="a" style="left:956px;top:484px;width:935px;height:240px;background:#f0f0f0;"></div>
<div class="t" style="right:787.0px;top:512.5px;font-size:16.8px;color:#222;">File name:</div>
<div class="a" style="left:1141px;top:503px;width:742px;height:33px;border:1px solid #c9c9c9;background:#fff"></div>
<div class="t" style="left:1150.0px;top:511.4px;font-size:17px;color:#222;">Presentation1</div>
<svg width="14" height="9" viewBox="0 0 14 9" style="left:1862px;top:515px"><path d="M1.5 1.5 L7 7 L12.5 1.5" fill="none" stroke="#555" stroke-width="1.6"/></svg>
<div class="t" style="right:787.0px;top:548.2px;font-size:16.9px;color:#222;">Save as type:</div>
<div class="a" style="left:1141px;top:540px;width:742px;height:32px;border:1px solid #cfcfcf;background:#e5e5e5"></div>
<div class="t" style="left:1145.5px;top:548.1px;font-size:17px;color:#222;">PowerPoint Presentation</div>
<svg width="14" height="9" viewBox="0 0 14 9" style="left:1862px;top:551px"><path d="M1.5 1.5 L7 7 L12.5 1.5" fill="none" stroke="#555" stroke-width="1.6"/></svg>
<div class="t" style="right:784.0px;top:587.6px;font-size:17.6px;color:#6d6d6d;">Authors:</div>
<div class="t" style="left:1153.5px;top:587.7px;font-size:17.5px;color:#3b72c4;">nunavik ice</div>
<div class="t" style="left:1474.5px;top:587.6px;font-size:17.6px;color:#6d6d6d;">Tags:</div>
<div class="t" style="left:1529.5px;top:587.7px;font-size:17.5px;color:#3b72c4;">Add a tag</div>
<svg width="16" height="11" viewBox="0 0 16 11" style="left:966px;top:684px"><path d="M2 9 L8 3 L14 9" fill="none" stroke="#333" stroke-width="2.6"/></svg>
<div class="t" style="left:991.5px;top:683.7px;font-size:17.5px;color:#222;">Hide Folders</div>
<div class="t" style="left:1487.0px;top:680.7px;font-size:17.5px;color:#222;">Tools</div>
<svg width="14" height="9" viewBox="0 0 14 9" style="left:1546px;top:683px"><path d="M0.5 0.5 H13.5 L7 8Z" fill="#111"/></svg>
<div class="a" style="left:1584px;top:670px;width:131px;height:37px;border:1px solid #5f9ada;background:#e6eff9"></div>
<div class="t" style="left:1630.5px;top:681.0px;font-size:17.3px;color:#222;">Save</div>
<div class="a" style="left:1734px;top:670px;width:130px;height:37px;border:1px solid #c9c9c9;background:#e1e1e1"></div>
<div class="t" style="left:1773.5px;top:681.0px;font-size:17.3px;color:#222;">Cancel</div>
<svg width="14" height="14" viewBox="0 0 14 14" style="left:1872px;top:708px"><g fill="#999"><rect x="10" y="1" width="2" height="2"/><rect x="6" y="5" width="2" height="2"/><rect x="10" y="5" width="2" height="2"/><rect x="2" y="9" width="2" height="2"/><rect x="6" y="9" width="2" height="2"/><rect x="10" y="9" width="2" height="2"/></g></svg>
<svg width="20" height="28" viewBox="0 0 20 28" style="left:831px;top:796px"><path d="M1 1 V22 L6 17 L10 26 L13.5 24.5 L9.5 15.5 H16.5Z" fill="#fff" stroke="#222" stroke-width="1.3" stroke-linejoin="round"/></svg>
<svg width="20" height="28" viewBox="0 0 20 28" style="left:1696px;top:685px"><path d="M1 1 V22 L6 17 L10 26 L13.5 24.5 L9.5 15.5 H16.5Z" fill="#fff" stroke="#222" stroke-width="1.3" stroke-linejoin="round"/></svg>
<svg width="20" height="28" viewBox="0 0 20 28" style="left:45px;top:73px"><path d="M1 1 V22 L6 17 L10 26 L13.5 24.5 L9.5 15.5 H16.5Z" fill="#fff" stroke="#222" stroke-width="1.3" stroke-linejoin="round"/></svg>
<svg width="320" height="140" viewBox="0 0 320 140" style="left:0px;top:0px"><path d="M74 66 L262 98" stroke="#fa7410" stroke-width="10"/><path d="M287 103 L262 86.5 L257.5 111Z" fill="#fa7410" stroke="#fa7410" stroke-width="2" stroke-linejoin="round"/></svg>
<div class="a" style="left:4px;top:52px;width:74px;height:54px;border:10px solid #fa7410;border-radius:6px"></div>
<svg width="39.0" height="39.0" viewBox="0 0 39.0 39.0" style="left:52.0px;top:84.0px"><circle cx="19.5" cy="19.5" r="17.5" fill="#fa7410"/><path d="M19.0 7.0 H24.3 V31.5 H19.0 V14.5 L12.0 18.3 V13.0 Z" fill="#fff"/></svg>
<div class="a" style="left:294px;top:447px;width:159px;height:59px;border:10px solid #fa7410;border-radius:5px"></div>
<svg width="39.0" height="39.0" viewBox="0 0 39.0 39.0" style="left:430.5px;top:430.5px"><circle cx="19.5" cy="19.5" r="17.5" fill="#fa7410"/><text x="19.5" y="30.5" text-anchor="middle" font-family="Liberation Sans" font-weight="bold" font-size="31" fill="#fff">2</text></svg>
<svg width="300" height="140" viewBox="0 0 300 140" style="left:700px;top:640px"><path d="M782 753 L955 672" transform="translate(-700,-640)" stroke="#fa7410" stroke-width="9.5"/><path d="M972 662 L944 663 L953 686Z" transform="translate(-700,-640)" fill="#fa7410" stroke="#fa7410" stroke-width="2" stroke-linejoin="round"/></svg>
<div class="a" style="left:537px;top:753px;width:485px;height:80px;border:10px solid #fa7410;border-radius:6px"></div>
<svg width="39.0" height="39.0" viewBox="0 0 39.0 39.0" style="left:998.5px;top:735.5px"><circle cx="19.5" cy="19.5" r="17.5" fill="#fa7410"/><text x="19.5" y="30.5" text-anchor="middle" font-family="Liberation Sans" font-weight="bold" font-size="31" fill="#fff">3</text></svg>
<div class="a" style="left:958px;top:294px;width:212px;height:52px;border:9px solid #fa7410;border-radius:5px"></div>
<svg width="39.0" height="39.0" viewBox="0 0 39.0 39.0" style="left:1149.0px;top:274.5px"><circle cx="19.5" cy="19.5" r="17.5" fill="#fa7410"/><text x="19.5" y="30.5" text-anchor="middle" font-family="Liberation Sans" font-weight="bold" font-size="31" fill="#fff">4</text></svg>
<div class="a" style="left:1133px;top:494px;width:139px;height:48px;border:10px solid #fa7410;border-radius:5px"></div>
<svg width="39.0" height="39.0" viewBox="0 0 39.0 39.0" style="left:1250.5px;top:476.5px"><circle cx="19.5" cy="19.5" r="17.5" fill="#fa7410"/><text x="19.5" y="30.5" text-anchor="middle" font-family="Liberation Sans" font-weight="bold" font-size="31" fill="#fff">5</text></svg>
<div class="a" style="left:1569px;top:653px;width:158px;height:71px;border:10px solid #fa7410;border-radius:5px"></div>
<svg width="39.0" height="39.0" viewBox="0 0 39.0 39.0" style="left:1704.0px;top:635.0px"><circle cx="19.5" cy="19.5" r="17.5" fill="#fa7410"/><text x="19.5" y="30.5" text-anchor="middle" font-family="Liberation Sans" font-weight="bold" font-size="31" fill="#fff">6</text></svg>
</body></html>
